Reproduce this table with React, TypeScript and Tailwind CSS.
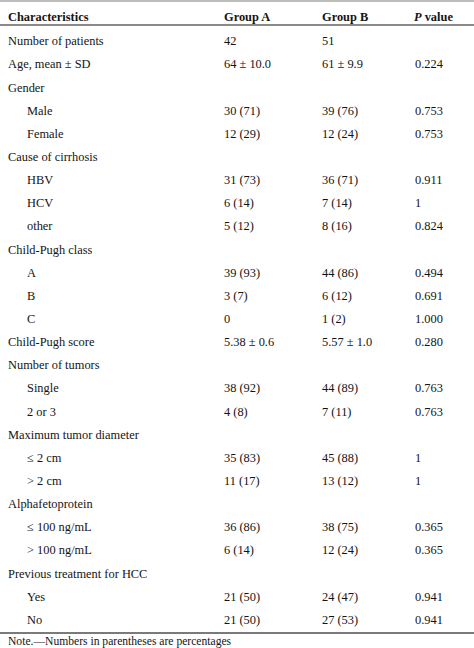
type Row = { label: string; sub?: boolean; a?: string; b?: string; p?: string };

const rows: Row[] = [
  { label: 'Number of patients', a: '42', b: '51' },
  { label: 'Age, mean ± SD', a: '64 ± 10.0', b: '61 ± 9.9', p: '0.224' },
  { label: 'Gender' },
  { label: 'Male', sub: true, a: '30 (71)', b: '39 (76)', p: '0.753' },
  { label: 'Female', sub: true, a: '12 (29)', b: '12 (24)', p: '0.753' },
  { label: 'Cause of cirrhosis' },
  { label: 'HBV', sub: true, a: '31 (73)', b: '36 (71)', p: '0.911' },
  { label: 'HCV', sub: true, a: '6 (14)', b: '7 (14)', p: '1' },
  { label: 'other', sub: true, a: '5 (12)', b: '8 (16)', p: '0.824' },
  { label: 'Child-Pugh class' },
  { label: 'A', sub: true, a: '39 (93)', b: '44 (86)', p: '0.494' },
  { label: 'B', sub: true, a: '3 (7)', b: '6 (12)', p: '0.691' },
  { label: 'C', sub: true, a: '0', b: '1 (2)', p: '1.000' },
  { label: 'Child-Pugh score', a: '5.38 ± 0.6', b: '5.57 ± 1.0', p: '0.280' },
  { label: 'Number of tumors' },
  { label: 'Single', sub: true, a: '38 (92)', b: '44 (89)', p: '0.763' },
  { label: '2 or 3', sub: true, a: '4 (8)', b: '7 (11)', p: '0.763' },
  { label: 'Maximum tumor diameter' },
  { label: '≤ 2 cm', sub: true, a: '35 (83)', b: '45 (88)', p: '1' },
  { label: '> 2 cm', sub: true, a: '11 (17)', b: '13 (12)', p: '1' },
  { label: 'Alphafetoprotein' },
  { label: '≤ 100 ng/mL', sub: true, a: '36 (86)', b: '38 (75)', p: '0.365' },
  { label: '> 100 ng/mL', sub: true, a: '6 (14)', b: '12 (24)', p: '0.365' },
  { label: 'Previous treatment for HCC' },
  { label: 'Yes', sub: true, a: '21 (50)', b: '24 (47)', p: '0.941' },
  { label: 'No', sub: true, a: '21 (50)', b: '27 (53)', p: '0.941' },
];

export default function App() {
  return (
    <div className="w-[474px] h-[648px] bg-white text-[#141414] text-[12.4px] overflow-hidden"
      style={{ fontFamily: '"Liberation Serif", "Times New Roman", serif' }}>
      {/* header */}
      <div className="border-t-2 border-[#bdbdbd] border-b-2 border-b-[#8a8a8a] h-[26px] flex items-center pt-[8px] font-bold">
        <div className="w-[224px] pl-[8px]">Characteristics</div>
        <div className="w-[98px]">Group A</div>
        <div className="w-[92px]">Group B</div>
        <div><span className="italic">P</span> value</div>
      </div>

      {/* body */}
      <div className="pt-[4px] border-b-2 border-[#7a7a7a]">
        {rows.map((r, i) => (
          <div key={i} className="h-[23.15px] flex items-center">
            <div className={`w-[224px] ${r.sub ? 'pl-[27px]' : 'pl-[8px]'}`}>{r.label}</div>
            <div className="w-[98px]">{r.a}</div>
            <div className="w-[93px]">{r.b}</div>
            <div>{r.p}</div>
          </div>
        ))}
      </div>

      <div className="pl-[8px] text-[11.6px] leading-[15px]">Note.—Numbers in parentheses are percentages</div>
    </div>
  );
}
